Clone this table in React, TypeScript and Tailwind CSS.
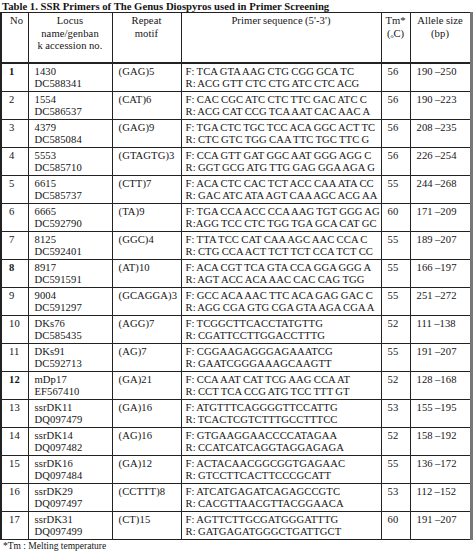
import React from 'react';

type Row = {
  no: string;
  bold?: boolean;
  locus: string;
  acc: string;
  motif: string;
  f: string;
  r: string;
  tm: string;
  size: string;
};

const rows: Row[] = [
  { no: '1', bold: true, locus: '1430', acc: 'DC588341', motif: '(GAG)5', f: 'F: TCA GTA AAG CTG CGG GCA TC', r: 'R: ACG GTT CTC CTG ATC CTC ACG', tm: '56', size: '190 –250' },
  { no: '2', locus: '1554', acc: 'DC586537', motif: '(CAT)6', f: 'F: CAC CGC ATC CTC TTC GAC ATC C', r: 'R: ACG CAT CCG TCA AAT CAC AAC A', tm: '56', size: '190 –223' },
  { no: '3', locus: '4379', acc: 'DC585084', motif: '(GAG)9', f: 'F: TGA CTC TGC TCC ACA GGC ACT TC', r: 'R: CTC GTC TGG CAA TTC TGC TTC G', tm: '56', size: '208 –235' },
  { no: '4', locus: '5553', acc: 'DC585710', motif: '(GTAGTG)3', f: 'F: CCA GTT GAT GGC AAT GGG AGG C', r: 'R: GGT GCG ATG TTG GAG GGA AGA G', tm: '56', size: '226 –254' },
  { no: '5', locus: '6615', acc: 'DC585737', motif: '(CTT)7', f: 'F: ACA CTC CAC TCT ACC CAA ATA CC', r: 'R: GAC ATC ATA AGT CAA AGC ACG AA', tm: '55', size: '244 –268' },
  { no: '6', locus: '6665', acc: 'DC592790', motif: '(TA)9', f: 'F: TGA CCA ACC CCA AAG TGT GGG AG', r: 'R:AGG TCC CTC TGG TGA GCA CAT GC', tm: '60', size: '171 –209' },
  { no: '7', locus: '8125', acc: 'DC592401', motif: '(GGC)4', f: 'F: TTA TCC CAT CAA AGC AAC CCA C', r: 'R: CTG CCA ACT TCT TCT CCA TCT CC', tm: '55', size: '189 –207' },
  { no: '8', bold: true, locus: '8917', acc: 'DC591591', motif: '(AT)10', f: 'F: ACA CGT TCA GTA CCA GGA GGG A', r: 'R: AGT ACC ACA AAC CAC CAG TGG', tm: '55', size: '166 –197' },
  { no: '9', locus: '9004', acc: 'DC591297', motif: '(GCAGGA)3', f: 'F: GCC ACA AAC TTC ACA GAG GAC C', r: 'R: AGG CGA GTG CGA GTA AGA CGA A', tm: '55', size: '251 –272' },
  { no: '10', locus: 'DKs76', acc: 'DC585435', motif: '(AGG)7', f: 'F: TCGGCTTCACCTATGTTG', r: 'R: CGATTCCTTGGACCTTTG', tm: '52', size: '111 –138' },
  { no: '11', locus: 'DKs91', acc: 'DC592713', motif: '(AG)7', f: 'F: CGGAAGAGGGAGAAATCG', r: 'R: GAATCGGGAAAGCAAGTT', tm: '55', size: '191 –207' },
  { no: '12', bold: true, locus: 'mDp17', acc: 'EF567410', motif: '(GA)21', f: 'F: CCA AAT CAT TCG AAG CCA AT', r: 'R: CCT TCA CCG ATG TCC TTT GT', tm: '52', size: '128 –168' },
  { no: '13', locus: 'ssrDK11', acc: 'DQ097479', motif: '(GA)16', f: 'F: ATGTTTCAGGGGTTCCATTG', r: 'R: TCACTCGTCTTTGCCTTTCC', tm: '53', size: '155 –195' },
  { no: '14', locus: 'ssrDK14', acc: 'DQ097482', motif: '(AG)16', f: 'F: GTGAAGGAACCCCATAGAA', r: 'R: CCATCATCAGGTAGGAGAGA', tm: '52', size: '158 –192' },
  { no: '15', locus: 'ssrDK16', acc: 'DQ097484', motif: '(GA)12', f: 'F: ACTACAACGGCGGTGAGAAC', r: 'R: GTCCTTCACTTCCCGCATT', tm: '55', size: '136 –172' },
  { no: '16', locus: 'ssrDK29', acc: 'DQ097497', motif: '(CCTTT)8', f: 'F: ATCATGAGATCAGAGCCGTC', r: 'R: CACGTTAACGTTACGGAACA', tm: '53', size: '112 –152' },
  { no: '17', locus: 'ssrDK31', acc: 'DQ097499', motif: '(CT)15', f: 'F: AGTTCTTGCGATGGGATTTG', r: 'R: GATGAGATGGGCTGATTGCT', tm: '60', size: '191 –207' },
];

const cell = 'border border-[#222] align-top pt-[2px] pb-0';

export default function App() {
  return (
    <div className="w-[474px] h-[551px] overflow-hidden bg-white text-[#151515] font-['Liberation_Serif',serif] text-[10.6px] leading-[12.5px] tracking-[0.1px] [word-spacing:-0.5px]">
      <div className="h-[12px] pl-[2px] font-bold text-[10.7px] leading-[12px] tracking-normal [word-spacing:0]">
        Table 1. SSR Primers of The Genus Diospyros used in Primer Screening
      </div>
      <table className="table-fixed border-collapse w-[472px] border-l-2 border-l-[#222] border-r-[3px] border-r-[#777]">
        <colgroup>
          <col className="w-[27px]" />
          <col className="w-[84px]" />
          <col className="w-[69px]" />
          <col className="w-[200px]" />
          <col className="w-[29px]" />
          <col className="w-[61px]" />
        </colgroup>
        <thead>
          <tr className="h-[50px]">
            <th className={`${cell} font-normal text-left pl-[8px]`}>No</th>
            <th className={`${cell} font-normal text-center px-[4px]`}>
              Locus
              <br />
              name/genban
              <br />k accession no.
            </th>
            <th className={`${cell} font-normal text-center`}>
              Repeat
              <br />
              motif
            </th>
            <th className={`${cell} font-normal text-center`}>Primer sequence (5'-3')</th>
            <th className={`${cell} font-normal text-center tracking-normal`}>
              Tm*
              <br />
              (<span className="text-[6px] align-[-1px]">o</span>C)
            </th>
            <th className={`${cell} font-normal text-center`}>
              Allele size
              <br />
              (bp)
            </th>
          </tr>
        </thead>
        <tbody className="border-t-2 border-t-[#222]">
          {rows.map((r) => (
            <tr key={r.no} className="h-[27px]">
              <td className={`${cell} pl-[7px] ${r.bold ? 'font-bold' : ''}`}>{r.no}</td>
              <td className={`${cell} pl-[6px]`}>
                {r.locus}
                <br />
                {r.acc}
              </td>
              <td className={`${cell} pl-[6px] whitespace-nowrap`}>{r.motif}</td>
              <td className={`${cell} pl-[4px] whitespace-nowrap`}>
                {r.f}
                <br />
                {r.r}
              </td>
              <td className={`${cell} pl-[6px]`}>{r.tm}</td>
              <td className={`${cell} pl-[6px] whitespace-nowrap`}>{r.size}</td>
            </tr>
          ))}
        </tbody>
      </table>
      <div className="pl-[3px] pt-[1px] text-[9.5px] leading-[11px] tracking-normal [word-spacing:0]">*Tm : Melting temperature</div>
    </div>
  );
}
